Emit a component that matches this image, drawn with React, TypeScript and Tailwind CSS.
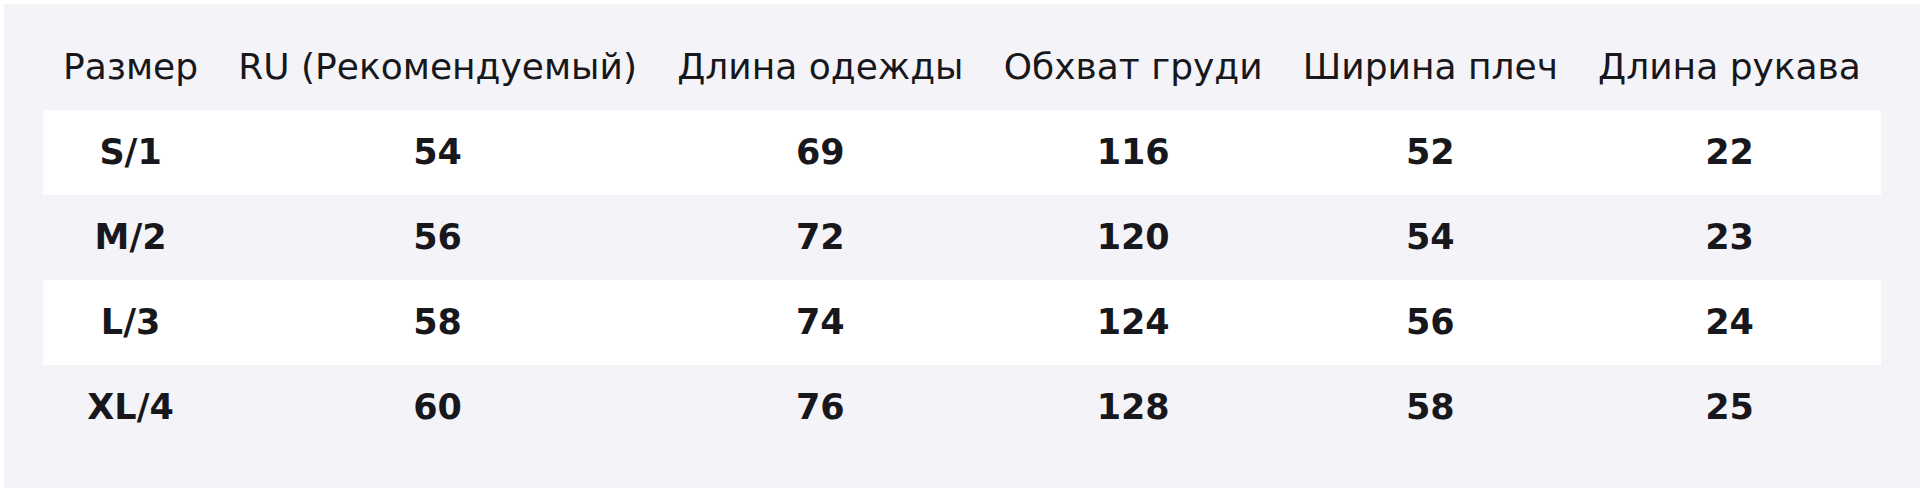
const headers = [
  "Размер",
  "RU (Рекомендуемый)",
  "Длина одежды",
  "Обхват груди",
  "Ширина плеч",
  "Длина рукава",
];

const rows = [
  ["S/1", "54", "69", "116", "52", "22"],
  ["M/2", "56", "72", "120", "54", "23"],
  ["L/3", "58", "74", "124", "56", "24"],
  ["XL/4", "60", "76", "128", "58", "25"],
];

export default function App() {
  return (
    <div className="bg-white p-1 w-[1924px] h-[493px]">
      <div
        className="bg-[#f4f3f8] h-[484px] px-[39px] pt-[20px] text-[#17171c]"
        style={{ fontFamily: '"DejaVu Sans", sans-serif' }}
      >
        <table className="w-full border-collapse">
          <thead>
            <tr className="h-[86px]">
              {headers.map((h) => (
                <th key={h} className="px-[20px] text-[36px] font-normal text-center whitespace-nowrap">
                  {h}
                </th>
              ))}
            </tr>
          </thead>
          <tbody>
            {rows.map((row, i) => (
              <tr key={row[0]} className={i % 2 === 0 ? "h-[85px] bg-white" : "h-[85px]"}>
                {row.map((cell, j) => (
                  <td key={j} className="px-[20px] text-[35px] font-bold text-center">
                    {cell}
                  </td>
                ))}
              </tr>
            ))}
          </tbody>
        </table>
      </div>
    </div>
  );
}
